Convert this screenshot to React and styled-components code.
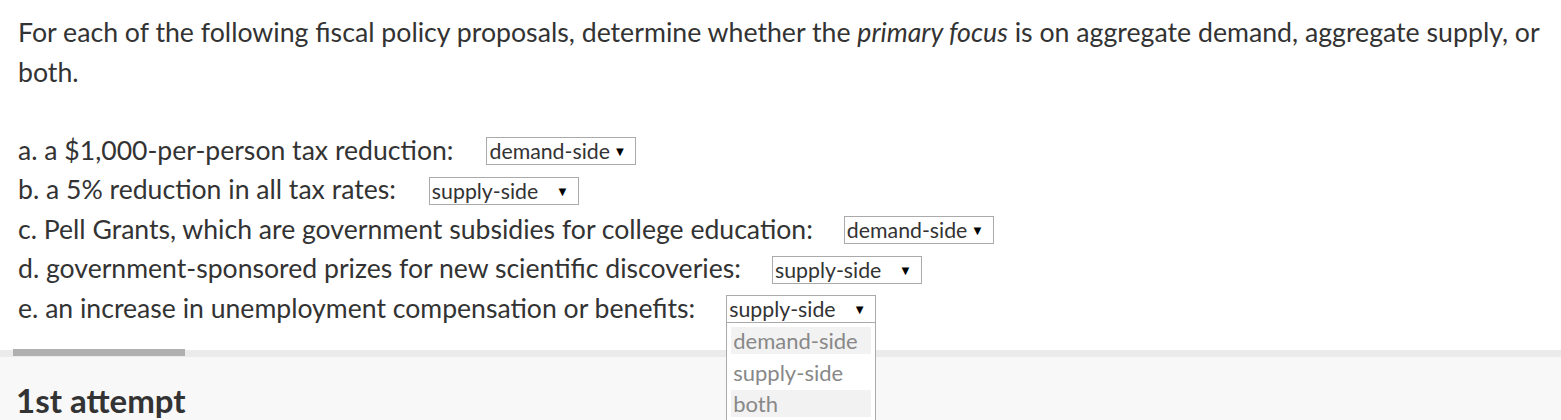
import React from "react";
import styled, { createGlobalStyle } from "styled-components";

const Global = createGlobalStyle`
  html, body { margin: 0; padding: 0; background: #fff; }
  body { font-family: Lato, "Noto Sans", sans-serif; color: #333; overflow: hidden; }
`;

const Page = styled.div`
  width: 1561px;
  height: 420px;
  display: flex;
  flex-direction: column;
  overflow: hidden;
`;

const Question = styled.div`
  padding: 13px 10px 0 18px;
  height: 357px;
  box-sizing: border-box;
`;

const Prompt = styled.p`
  margin: 0 0 38px 0;
  font-size: 26.7px;
  line-height: 39.5px;
  em { font-style: italic; }
`;

const Row = styled.div`
  display: flex;
  align-items: center;
  height: 39.5px;
  font-size: 26.6px;
`;

const Label = styled.span`
  white-space: nowrap;
`;

const SelectWrap = styled.div`
  position: relative;
  margin-left: ${(p) => p.$gap}px;
  margin-top: 3px;
`;

const SelectBox = styled.div`
  width: 150px;
  height: 28px;
  box-sizing: border-box;
  border: 1px solid #aaa;
  background: #fff;
  display: flex;
  align-items: center;
  justify-content: space-between;
  padding: 0 9px 0 2px;
  font-size: 21.3px;
  color: #333;
`;

const Arrow = styled.span`
  font-size: 13px;
  color: #000;
`;

const Menu = styled.div`
  position: absolute;
  top: 100%;
  left: 0;
  width: 150px;
  box-sizing: border-box;
  border: 1px solid #aaa;
  border-top: none;
  background: #fff;
  padding: 4px 4px 0 4px;
  z-index: 5;
`;

const Option = styled.div`
  height: 27px;
  margin-bottom: 4.5px;
  display: flex;
  align-items: center;
  padding-left: 2px;
  font-size: 22px;
  color: #888;
  background: ${(p) => (p.$shade ? "#f2f2f2" : "transparent")};
`;

const Attempt = styled.div`
  flex: 1;
  background: #f8f8f8;
  border-top: 7px solid #ebebeb;
  position: relative;
  padding: 0 16px;
`;

const Progress = styled.div`
  position: absolute;
  top: -8px;
  left: 13px;
  width: 172px;
  height: 7px;
  background: #b0b0b0;
`;

const AttemptTitle = styled.h2`
  margin: 23px 0 0 0;
  font-size: 33px;
  font-weight: 700;
  line-height: 40px;
  color: #333;
`;

const rows = [
  { label: "a. a $1,000-per-person tax reduc\u200Ction:", value: "demand-side", gap: 33 },
  { label: "b. a 5% reduc\u200Ction in all tax rates:", value: "supply-side", gap: 33 },
  { label: "c. Pell Grants, which are government subsidies for college educa\u200Ction:", value: "demand-side", gap: 31 },
  { label: "d. government-sponsored prizes for new scientific discoveries:", value: "supply-side", gap: 31 },
  { label: "e. an increase in unemployment compensa\u200Ction or benefits:", value: "supply-side", gap: 31, open: true },
];

export default function App() {
  return (
    <Page>
      <Global />
      <Question>
        <Prompt>
          For each of the following fiscal policy proposals, determine whether the <em>primary focus</em> is on aggregate demand, aggregate supply, or both.
        </Prompt>
        {rows.map((r) => (
          <Row key={r.label}>
            <Label>{r.label}</Label>
            <SelectWrap $gap={r.gap}>
              <SelectBox>
                <span>{r.value}</span>
                <Arrow>▼</Arrow>
              </SelectBox>
              {r.open && (
                <Menu>
                  <Option $shade>demand-side</Option>
                  <Option>supply-side</Option>
                  <Option $shade>both</Option>
                </Menu>
              )}
            </SelectWrap>
          </Row>
        ))}
      </Question>
      <Attempt>
        <Progress />
        <AttemptTitle>1st attempt</AttemptTitle>
      </Attempt>
    </Page>
  );
}
